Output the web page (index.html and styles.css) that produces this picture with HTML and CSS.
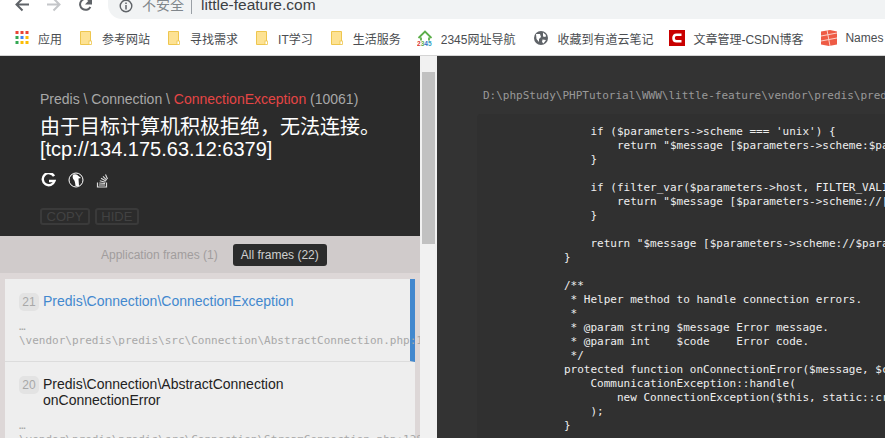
FILE: index.html
```html
<!DOCTYPE html>
<html lang="zh">
<head>
<meta charset="utf-8">
<title>little-feature.com</title>
<link rel="stylesheet" href="styles.css">
</head>
<body>
<div class="toolbar">
  <svg class="nav-icon" width="16" height="20" viewBox="0 0 16 20"><path d="M15 4.500H3M8.500 -1.500L2.500 4.500L8.500 10.500" fill="none" stroke="#5f6368" stroke-width="2"/></svg>
  <svg class="nav-icon" width="16" height="20" viewBox="0 0 16 20"><path d="M1 4.500H13M7.500 -1.500L13.500 4.500L7.500 10.500" fill="none" stroke="#c4c6c9" stroke-width="2"/></svg>
  <svg class="nav-icon" width="16" height="20" viewBox="0 0 16 20"><path d="M12.400 7A5.500 5.500 0 1 1 11.500 0.500" fill="none" stroke="#5f6368" stroke-width="2"/><path d="M14 -3V4.500H7z" fill="#5f6368"/></svg>
  <div class="omnibox">
    <svg class="info" width="14" height="14" viewBox="0 0 14 14"><circle cx="7" cy="7" r="5.800" fill="none" stroke="#5f6368" stroke-width="1.400"/><path d="M7 6V10.500M7 3.500V5" stroke="#5f6368" stroke-width="1.500"/></svg>
    <span class="insecure">不安全</span>
    <span class="divider"></span>
    <span class="url">little-feature.com</span>
  </div>
</div>
<div class="bookmarks">
  <div class="bm"><svg width="16" height="16" viewBox="0 0 16 16"><g><rect x="1.500" y="1" width="3" height="3" fill="#ea4335"/><rect x="6.500" y="1" width="3" height="3" fill="#ea4335"/><rect x="11.500" y="1" width="3" height="3" fill="#ea4335"/><rect x="1.500" y="6" width="3" height="3" fill="#34a853"/><rect x="6.500" y="6" width="3" height="3" fill="#4285f4"/><rect x="11.500" y="6" width="3" height="3" fill="#fbbc05"/><rect x="1.500" y="11" width="3" height="3" fill="#34a853"/><rect x="6.500" y="11" width="3" height="3" fill="#fbbc05"/><rect x="11.500" y="11" width="3" height="3" fill="#fbbc05"/></g></svg>应用</div>
  <div class="bm"><svg width="16" height="16" viewBox="0 0 16 16"><path d="M2.500 1.500H12.500V14.500H2.500z" fill="#fde293" stroke="#eec64e"/><rect x="11" y="11" width="2.500" height="3.500" fill="#fff" stroke="#eec64e" stroke-width=".8"/></svg>参考网站</div>
  <div class="bm"><svg width="16" height="16" viewBox="0 0 16 16"><path d="M2.500 1.500H12.500V14.500H2.500z" fill="#fde293" stroke="#eec64e"/><rect x="11" y="11" width="2.500" height="3.500" fill="#fff" stroke="#eec64e" stroke-width=".8"/></svg>寻找需求</div>
  <div class="bm"><svg width="16" height="16" viewBox="0 0 16 16"><path d="M2.500 1.500H12.500V14.500H2.500z" fill="#fde293" stroke="#eec64e"/><rect x="11" y="11" width="2.500" height="3.500" fill="#fff" stroke="#eec64e" stroke-width=".8"/></svg>IT学习</div>
  <div class="bm"><svg width="16" height="16" viewBox="0 0 16 16"><path d="M2.500 1.500H12.500V14.500H2.500z" fill="#fde293" stroke="#eec64e"/><rect x="11" y="11" width="2.500" height="3.500" fill="#fff" stroke="#eec64e" stroke-width=".8"/></svg>生活服务</div>
  <div class="bm bm-wide"><svg width="16" height="16" viewBox="0 0 16 16"><path d="M1.500 8L8 1.500L14.500 8M4 7.500V10.500M12 7.500V10.500" fill="none" stroke="#5cae4a" stroke-width="1.800"/><text class="mini" x="0" y="15.500"><tspan fill="#d9342b">2</tspan><tspan fill="#5cae4a">3</tspan><tspan fill="#2f6fc4">4</tspan><tspan fill="#2f9fc4">5</tspan></text></svg>2345网址导航</div>
  <div class="bm"><svg width="16" height="16" viewBox="0 0 16 16"><circle cx="8" cy="8" r="7" fill="#5f6368"/><path d="M3 4L7 4L8 7L6 9L6 12L3.500 9zM10 2.500L13 5L12.500 7L10 6.500zM9.500 9.500L13 10L10.500 13.500L9 12z" fill="#fff"/></svg>收藏到有道云笔记</div>
  <div class="bm bm-wide"><svg width="16" height="16" viewBox="0 0 16 16"><rect width="16" height="16" fill="#c90000"/><path d="M12.500 4.800H7.500Q4.500 4.800 4.500 8T7.500 11.200H12.500" fill="none" stroke="#fff" stroke-width="2.600"/></svg>文章管理-CSDN博客</div>
  <div class="bm"><svg width="16" height="16" viewBox="0 0 16 16"><path d="M0 1.500L9 0L16 1.500V14.500L8 16L0 14.500z" fill="#ee5b45"/><path d="M0 6L16 3M0 11L16 8M6 0L9 16" stroke="#fbd2ca" stroke-width="1"/></svg>Names</div>
</div>
<div class="main">
  <div class="left">
    <header class="head">
      <div class="exc">Predis \ Connection \ <span class="exc-name">ConnectionException</span> (10061)</div>
      <div class="msg">由于目标计算机积极拒绝，无法连接。<br>[tcp://134.175.63.12:6379]</div>
      <div class="links">
        <svg width="15" height="15" viewBox="0 0 15 15"><path d="M13 3.200A6 6 0 1 0 13.500 8H8" fill="none" stroke="#fff" stroke-width="2.400"/></svg>
        <svg width="16" height="16" viewBox="0 0 16 16"><circle cx="8" cy="8" r="7" fill="#2b2b2b" stroke="#fff" stroke-width="1"/><path d="M5 2.500Q9 1.500 10.500 4L13 6L10.500 6.500L11 14H7.500Q7 9 6 8Q4 6 5 2.500z" fill="#fff"/></svg>
        <svg width="13" height="16" viewBox="0 0 13 16"><path d="M1.500 10.500V15H10.500V10.500" fill="none" stroke="#ddd" stroke-width="1.200"/><path d="M3 13H9M3.200 11L9 11.500M3.800 8.800L9.400 10.200M5 6.300L10 9M7 4.300L10.800 8.100M9.500 2.500L11.500 7" stroke="#ddd" stroke-width="1.100"/></svg>
      </div>
      <div class="actions"><span class="btn">COPY</span><span class="btn">HIDE</span></div>
    </header>
    <div class="tabs"><span class="tab">Application frames (1)</span><span class="tab tab-on">All frames (22)</span></div>
    <div class="frames">
      <div class="frame frame-on">
        <div class="frame-title"><span class="num">21</span><div class="cls cls-on">Predis\Connection\ConnectionException</div></div>
        <div class="file">…<br>\vendor\predis\predis\src\Connection\AbstractConnection.php:155</div>
      </div>
      <div class="frame">
        <div class="frame-title"><span class="num">20</span><div class="cls">Predis\Connection\AbstractConnection<br>onConnectionError</div></div>
        <div class="file">…<br>\vendor\predis\predis\src\Connection\StreamConnection.php:128</div>
      </div>
    </div>
  </div>
  <div class="scrollbar"><div class="thumb"></div></div>
  <div class="right">
    <div class="path">D:\phpStudy\PHPTutorial\WWW\little-feature\vendor\predis\predis\src\Connection\AbstractConnection.php</div>
    <pre class="code">    if ($parameters-&gt;scheme === 'unix') {
        return "$message [$parameters-&gt;scheme:$parameters-&gt;path]";
    }

    if (filter_var($parameters-&gt;host, FILTER_VALIDATE_IP, FILTER_FLAG_IPV6)) {
        return "$message [$parameters-&gt;scheme://[$parameters-&gt;host]:$parameters-&gt;port]";
    }

    return "$message [$parameters-&gt;scheme://$parameters-&gt;host:$parameters-&gt;port]";
}

/**
 * Helper method to handle connection errors.
 *
 * @param string $message Error message.
 * @param int    $code    Error code.
 */
protected function onConnectionError($message, $code = null)
    CommunicationException::handle(
        new ConnectionException($this, static::createExceptionMessage($message), $code)
    );
}</pre>
  </div>
</div>
</body>
</html>
```
FILE: styles.css
```css
* { box-sizing: border-box; }
html, body { margin: 0; height: 100%; overflow: hidden; background: #fff; }
body { width: 885px; height: 438px; font-family: "Liberation Sans", "Noto Sans CJK SC", sans-serif; display: flex; flex-direction: column; }
.toolbar { height: 19px; flex: none; display: flex; align-items: flex-start; overflow: hidden; padding-left: 14px; }
.nav-icon { flex: none; margin-right: 16px; }
.omnibox { flex: 1; height: 19px; margin-left: -2px; background: #f1f3f4; border-radius: 0 0 0 14px; display: flex; align-items: center; padding: 0 0 8px 11px; color: #5f6368; white-space: nowrap; }
.info { flex: none; margin-right: 9px; }
.insecure { font-size: 14px; line-height: 16px; margin-bottom: 2px; color: #80868b; }
.divider { width: 1px; height: 17px; background: #9aa0a6; margin: 0 9px 0 7px; }
.url { font-size: 15.500px; line-height: 16px; margin-bottom: 2px; color: #3c4043; }
.bookmarks { height: 37px; flex: none; display: flex; align-items: center; gap: 16px; padding: 2px 0 0 14px; border-bottom: 1px solid #d4d4d4; font-size: 12px; color: #4a4d51; white-space: nowrap; overflow: hidden; }
.bm { display: flex; align-items: center; gap: 8px; flex: none; }
.bm-wide { margin-right: 2px; }
.mini { font-family: "Liberation Sans", sans-serif; font-size: 6.500px; font-weight: 700; }
.main { flex: 1; min-height: 0; display: flex; overflow: hidden; }
.left { width: 420px; flex: none; background: #ddd7d7; overflow: hidden; }
.head { height: 180px; background: #2b2b2b; padding: 35px 0 0 40px; }
.exc { font-size: 14px; line-height: 16px; color: #a8a8a8; white-space: nowrap; }
.exc-name { color: #e54545; }
.msg { margin-top: 9px; font-size: 20px; line-height: 22px; color: #fff; white-space: nowrap; }
.links { display: flex; align-items: center; gap: 12px; margin-top: 12px; height: 16px; padding-left: 1px; }
.actions { display: flex; gap: 5px; margin-top: 20px; }
.btn { display: block; height: 17px; padding: 0 4.500px; border: 2px solid #3a3a3a; border-radius: 3px; font-size: 13px; line-height: 13px; color: #424242; }
.tabs { height: 37px; background: #d0cbcb; display: flex; align-items: center; justify-content: flex-start; padding-left: 93px; gap: 7px; font-size: 12px; color: #a19d9d; }
.tab { padding: 0 8px; height: 22px; line-height: 22px; border-radius: 3px; white-space: nowrap; }
.tab-on { background: #2b2b2b; color: #cfcfcf; }
.frames { margin: 6px 5px 0; }
.frame { background: #eee; border-bottom: 1px solid #dcdcdc; padding: 14px 0 0 14px; height: 83px; border-right: 5px solid transparent; }
.frame-on { border-right-color: #4288ce; }
.frame-title { display: flex; align-items: flex-start; gap: 4px; }
.num { flex: none; width: 20px; height: 18px; margin-bottom: -2px; border-radius: 5px; background: #e3e3e3; color: #a8a8a8; font-size: 12px; line-height: 18px; text-align: center; }
.cls { font-size: 14px; line-height: 16px; color: #222; white-space: nowrap; }
.cls-on { color: #4288ce; }
.file { margin-top: 11px; font-family: "DejaVu Sans Mono", monospace; font-size: 11px; line-height: 14px; color: #a8a8a8; white-space: nowrap; }
.scrollbar { width: 17px; flex: none; background: #f1f1f1; padding: 16px 2px 0; }
.thumb { height: 172px; background: #c1c1c1; }
.right { flex: 1; min-width: 0; background: #333; padding-top: 33px; overflow: hidden; }
.path { margin-left: 46px; font-family: "DejaVu Sans Mono", monospace; font-size: 11px; line-height: 14px; color: #999; white-space: nowrap; }
.code { margin: 11px 0 0 40px; padding: 11px 0 0 87px; min-height: 400px; background: #303030; border-radius: 4px 0 0 4px; font-family: "DejaVu Sans Mono", monospace; font-size: 11px; line-height: 14px; color: #eee; }
```
